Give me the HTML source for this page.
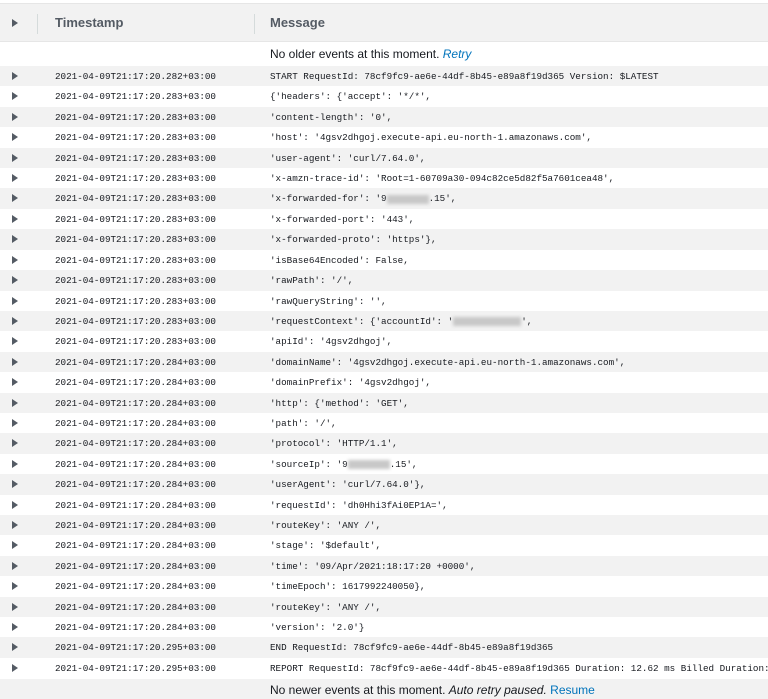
<!DOCTYPE html>
<html><head><meta charset="utf-8"><style>
body{margin:0;width:768px;height:699px;overflow:hidden;background:#fff;font-family:"Liberation Sans",sans-serif;position:relative}
.hdr{position:absolute;top:3px;left:0;width:768px;height:39px;background:#f2f2f2;border-top:1px solid #e6e6e6;border-bottom:1px solid #e6e6e6;box-sizing:border-box}
.hdr span{position:absolute;top:11px;font-size:13px;font-weight:bold;color:#545b64}
.sep{position:absolute;top:10px;width:1px;height:20px;background:#d5dbdb}
.tri{position:absolute;left:12px;width:0;height:0;border-left:6px solid #545b64;border-top:4px solid transparent;border-bottom:4px solid transparent}
.row{position:absolute;left:0;width:768px;height:20.41px;font-family:"Liberation Mono",monospace;font-size:9.25px;color:#16191f;white-space:nowrap;overflow:hidden}
.row.g{background:#f2f2f2}
.row .t{position:absolute;left:55px;top:5px}
.row .m{position:absolute;left:270px;top:5px}
.row .tri{top:6px}
.info{position:absolute;left:270px;font-size:12px;color:#16191f}
.info a{color:#0073bb}
.blur{display:inline-block;background:#c8c8c8;filter:blur(1.5px);height:9px;vertical-align:middle}
</style></head><body>
<div class="hdr"><div class="tri" style="top:15px"></div><div class="sep" style="left:37px"></div><span style="left:55px">Timestamp</span><div class="sep" style="left:254px"></div><span style="left:270px">Message</span></div>
<div class="info" style="top:47px">No older events at this moment. <i><a>Retry</a></i></div>
<div id="rows"></div>
<div style="position:absolute;top:679px;left:0;width:768px;height:20px;background:#f2f2f2"></div>
<div class="info" style="top:683px">No newer events at this moment. <i>Auto retry paused.</i> <a>Resume</a></div>
<script>
var ts=["282","283","283","283","283","283","283","283","283","283","283","283","283","283","284","284","284","284","284","284","284","284","284","284","284","284","284","284","295","295"];
var ms=["START RequestId: 78cf9fc9-ae6e-44df-8b45-e89a8f19d365 Version: $LATEST",
"{'headers': {'accept': '*/*',","'content-length': '0',","'host': '4gsv2dhgoj.execute-api.eu-north-1.amazonaws.com',","'user-agent': 'curl/7.64.0',","'x-amzn-trace-id': 'Root=1-60709a30-094c82ce5d82f5a7601cea48',",
"'x-forwarded-for': '9<span class=blur style=width:42px></span>.15',","'x-forwarded-port': '443',","'x-forwarded-proto': 'https'},","'isBase64Encoded': False,","'rawPath': '/',","'rawQueryString': '',",
"'requestContext': {'accountId': '<span class=blur style=width:68px></span>',","'apiId': '4gsv2dhgoj',","'domainName': '4gsv2dhgoj.execute-api.eu-north-1.amazonaws.com',","'domainPrefix': '4gsv2dhgoj',",
"'http': {'method': 'GET',","'path': '/',","'protocol': 'HTTP/1.1',","'sourceIp': '9<span class=blur style=width:42px></span>.15',","'userAgent': 'curl/7.64.0'},","'requestId': 'dh0Hhi3fAi0EP1A=',",
"'routeKey': 'ANY /',","'stage': '$default',","'time': '09/Apr/2021:18:17:20 +0000',","'timeEpoch': 1617992240050},","'routeKey': 'ANY /',","'version': '2.0'}",
"END RequestId: 78cf9fc9-ae6e-44df-8b45-e89a8f19d365","REPORT RequestId: 78cf9fc9-ae6e-44df-8b45-e89a8f19d365 Duration: 12.62 ms Billed Duration: 13 ms"];
var h="";
for(var i=0;i<30;i++){h+='<div class="row'+(i%2==0?' g':'')+'" style="top:'+(66+i*20.41)+'px"><div class="tri"></div><span class="t">2021-04-09T21:17:20.'+ts[i]+'+03:00</span><span class="m">'+ms[i]+'</span></div>';}
document.getElementById("rows").innerHTML=h;
</script>
</body></html>
